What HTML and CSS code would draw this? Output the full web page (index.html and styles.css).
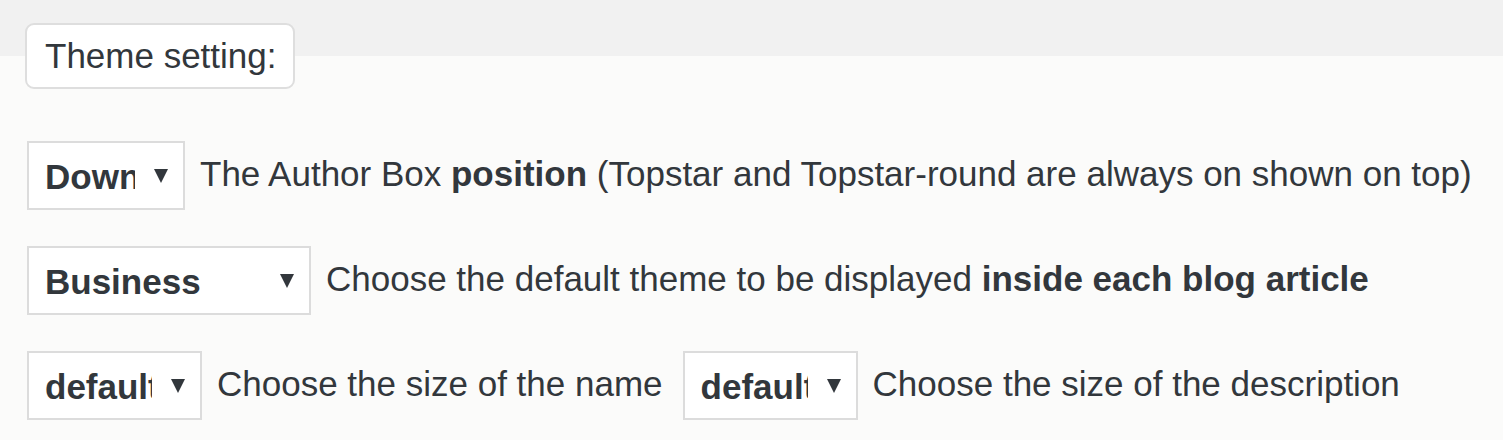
FILE: index.html
```html
<!DOCTYPE html>
<html lang="en">
<head>
    <meta charset="UTF-8">
    <title>Theme setting</title>
    <link rel="stylesheet" href="styles.css">
</head>
<body>
    <div class="settings">
        <div class="title">Theme setting:</div>

        <div class="row">
            <div class="select select-pos">
                <span class="value">Down</span>
                <span class="arrow"></span>
            </div>
            <span class="label">The Author Box <b>position</b> (Topstar and Topstar-round are always on shown on top)</span>
        </div>

        <div class="row">
            <div class="select select-theme">
                <span class="value">Business</span>
                <span class="arrow"></span>
            </div>
            <span class="label">Choose the default theme to be displayed <b>inside each blog article</b></span>
        </div>

        <div class="row">
            <div class="select select-size">
                <span class="value">default</span>
                <span class="arrow"></span>
            </div>
            <span class="label">Choose the size of the name</span>
            <div class="select select-size select-second">
                <span class="value">default</span>
                <span class="arrow"></span>
            </div>
            <span class="label">Choose the size of the description</span>
        </div>
    </div>
</body>
</html>
```

FILE: styles.css
```css
* {
    margin: 0;
    padding: 0;
    box-sizing: border-box;
}

body {
    font-family: 'Liberation Sans', Arial, sans-serif;
    font-size: 35px;
    color: #32373c;
    background: linear-gradient(#f1f1f1 0, #f1f1f1 56px, #fbfbfa 56px);
    min-height: 440px;
}

.settings {
    padding: 23px 0 0 25px;
}

/* header pill */
.title {
    display: inline-block;
    height: 66px;
    line-height: 40px;
    padding: 11px 16px 11px 18px;
    background: #fff;
    border: 2px solid #dedede;
    border-radius: 9px;
}

.row {
    display: flex;
    align-items: center;
    gap: 15px;
    margin-left: 2px;
    margin-top: 36px;
    white-space: nowrap;
}

.title + .row {
    margin-top: 52px;
}

.select {
    display: flex;
    align-items: center;
    height: 69px;
    padding: 3px 15px 0 16px;
    background: #fff;
    border: 2px solid #dcdcdc;
    font-weight: bold;
}

.value {
    display: block;
    overflow: hidden;
    white-space: nowrap;
}

.select-pos .value { width: 90px; }
.select-theme .value { width: 216px; }
.select-size .value { width: 107px; }

.select-second {
    margin-left: 5px;
}

.arrow {
    width: 0;
    height: 0;
    margin-left: 19px;
    margin-top: -3px;
    border-left: 7px solid transparent;
    border-right: 7px solid transparent;
    border-top: 14px solid #32373c;
}

.label {
    margin-bottom: 4px;
}

.label b {
    font-weight: bold;
}
```
